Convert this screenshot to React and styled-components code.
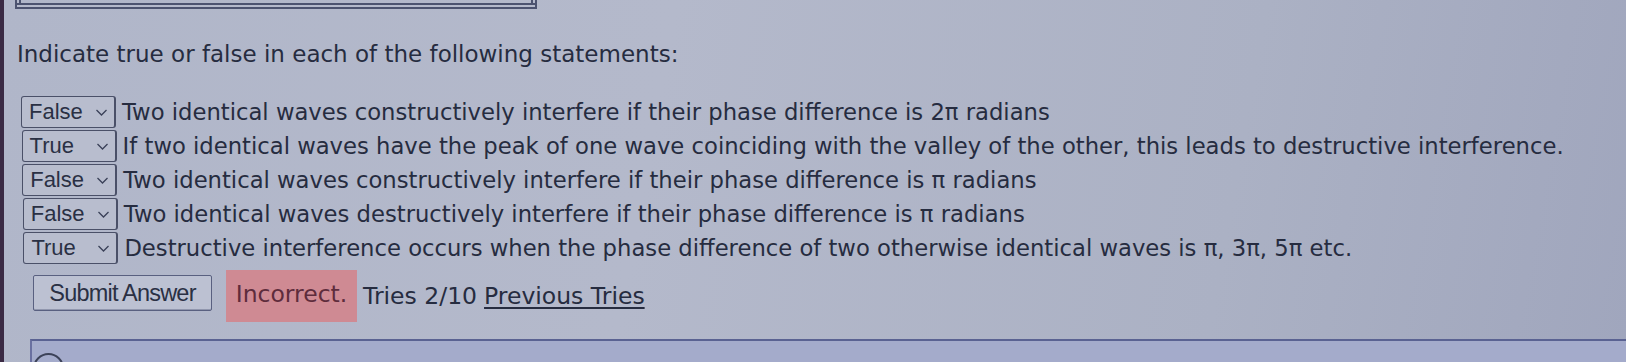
import React from 'react'
import styled, { createGlobalStyle } from 'styled-components'

const GlobalStyle = createGlobalStyle`
  html, body {
    margin: 0;
    padding: 0;
    height: 362px;
    overflow: hidden;
    background: linear-gradient(100deg, #b0b6c9 0%, #b4b9cb 40%, #abb1c4 75%, #a0a6bd 100%);
    font-family: 'DejaVu Sans', Verdana, sans-serif;
    color: #262c40;
  }
`

const statements = [
  { value: 'False', text: 'Two identical waves constructively interfere if their phase difference is 2π radians' },
  { value: 'True', text: 'If two identical waves have the peak of one wave coinciding with the valley of the other, this leads to destructive interference.' },
  { value: 'False', text: 'Two identical waves constructively interfere if their phase difference is π radians' },
  { value: 'False', text: 'Two identical waves destructively interfere if their phase difference is π radians' },
  { value: 'True', text: 'Destructive interference occurs when the phase difference of two otherwise identical waves is π, 3π, 5π etc.' },
]

const Chevron = () => (
  <svg width="13" height="9" viewBox="0 0 13 9">
    <path d="M1.5 2 L6.5 7 L11.5 2" fill="none" stroke="#3a4058" strokeWidth="1.3" />
  </svg>
)

const App = () => (
  <Page>
    <GlobalStyle />
    <TopBox />
    <Prompt>Indicate true or false in each of the following statements:</Prompt>
    <List>
      {statements.map((s, i) => (
        <Row key={i} $shift={i}>
          <Select>
            <span>{s.value}</span>
            <Chevron />
          </Select>
          <Statement>{s.text}</Statement>
        </Row>
      ))}
    </List>
    <Actions>
      <SubmitButton>Submit Answer</SubmitButton>
      <Feedback>Incorrect.</Feedback>
      <Tries>Tries 2/10</Tries>
      <PrevLink>Previous Tries</PrevLink>
    </Actions>
    <Panel>
      <Radio />
    </Panel>
  </Page>
)

const Page = styled.div`
  height: 362px;
  overflow: hidden;
  padding-left: 14px;
  border-left: 4px solid #3a2a44;
  box-sizing: border-box;
`

const TopBox = styled.div`
  width: 518px;
  height: 7px;
  margin-left: -3px;
  border: 2px solid #4c5370;
  border-top: none;
  box-shadow: inset 0 -2px 0 #b4b9cb, inset 0 -4px 0 #4c5370, inset 2px 0 0 #b4b9cb, inset 4px 0 0 #4c5370,
    inset -2px 0 0 #b4b9cb, inset -4px 0 0 #4c5370;
`

const Prompt = styled.div`
  margin-top: 31px;
  margin-left: -1px;
  font-size: 23px;
  line-height: 28px;
`

const List = styled.div`
  margin-top: 28px;
  display: flex;
  flex-direction: column;
  gap: 2px;
`

const Row = styled.div`
  display: flex;
  align-items: center;
  gap: 6px;
  padding-left: ${p => 3 + p.$shift * 0.6}px;
`

const Select = styled.div`
  width: 95px;
  height: 32px;
  flex: none;
  box-sizing: border-box;
  border: 1px solid #4a5068;
  border-right-width: 2px;
  border-radius: 3px;
  background: #b8bdce;
  display: flex;
  align-items: center;
  justify-content: space-between;
  padding: 0 6px 0 7px;
  font-family: 'Liberation Sans', Arial, sans-serif;
  font-size: 22px;
  color: #2a3044;
`

const Statement = styled.div`
  font-size: 22.7px;
  line-height: 30px;
  white-space: nowrap;
`

const Actions = styled.div`
  margin-top: 6px;
  display: flex;
  align-items: flex-start;
  padding-left: 15px;
`

const SubmitButton = styled.div`
  margin-top: 5px;
  height: 36px;
  width: 179px;
  box-sizing: border-box;
  display: flex;
  align-items: center;
  justify-content: center;
  border: 1px solid #596080;
  border-radius: 2px;
  background: #bcc1d2;
  font-family: 'Liberation Sans', Arial, sans-serif;
  font-size: 23.5px;
  letter-spacing: -0.8px;
  color: #2a3044;
  box-shadow: inset 0 -1px 0 #9096ad;
`

const Feedback = styled.div`
  margin-left: 14px;
  height: 52px;
  width: 131px;
  box-sizing: border-box;
  display: flex;
  align-items: center;
  justify-content: center;
  padding-bottom: 4px;
  background: #cf8a93;
  color: #5e2c3c;
  font-size: 23.5px;
`

const Tries = styled.span`
  margin-left: 6px;
  margin-top: 12px;
  font-size: 23.5px;
`

const PrevLink = styled.span`
  margin-left: 7px;
  margin-top: 12px;
  font-size: 23.5px;
  text-decoration: underline;
  text-underline-offset: 3px;
`

const Panel = styled.div`
  margin-top: 17px;
  margin-left: 12px;
  height: 60px;
  border-top: 2px solid #5a6292;
  border-left: 2px solid #6a70a0;
  background: #a4abcb;
`

const Radio = styled.div`
  width: 27px;
  height: 27px;
  margin: 12px 0 0 1px;
  border: 2px solid #3c4258;
  border-radius: 50%;
`

export default App
